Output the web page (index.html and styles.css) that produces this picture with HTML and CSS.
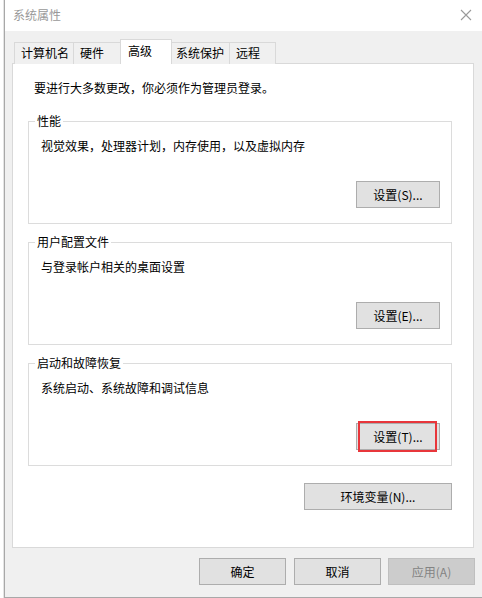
FILE: index.html
```html
<!DOCTYPE html>
<html lang="zh-CN">
<head>
<meta charset="utf-8">
<title>系统属性</title>
<link rel="stylesheet" href="styles.css">
</head>
<body>
<div class="window">
  <div class="titlebar">
    <span class="title">系统属性</span>
    <svg class="close" width="12" height="12" viewBox="0 0 12 12"><path d="M1 1 L11 11 M11 1 L1 11" stroke="#9a9a9a" stroke-width="1.1" fill="none"/></svg>
  </div>
  <div class="body">
    <div class="tabs">
      <div class="tab t1">计算机名</div>
      <div class="tab t2">硬件</div>
      <div class="tab t3 active">高级</div>
      <div class="tab t4">系统保护</div>
      <div class="tab t5">远程</div>
    </div>
    <div class="panel">
      <p class="intro">要进行大多数更改，你必须作为管理员登录。</p>
      <div class="group">
        <span class="legend">性能</span>
        <p class="desc">视觉效果，处理器计划，内存使用，以及虚拟内存</p>
        <div class="group-actions"><button class="btn btn-set">设置(S)...</button></div>
      </div>
      <div class="group">
        <span class="legend">用户配置文件</span>
        <p class="desc">与登录帐户相关的桌面设置</p>
        <div class="group-actions"><button class="btn btn-set">设置(E)...</button></div>
      </div>
      <div class="group">
        <span class="legend">启动和故障恢复</span>
        <p class="desc">系统启动、系统故障和调试信息</p>
        <div class="group-actions">
          <span class="hl-wrap"><button class="btn btn-set">设置(T)...</button><span class="highlight"></span></span>
        </div>
      </div>
      <div class="env-row"><button class="btn btn-env">环境变量(N)...</button></div>
    </div>
    <div class="footer">
      <button class="btn btn-foot ok">确定</button>
      <button class="btn btn-foot cancel">取消</button>
      <button class="btn btn-foot disabled">应用(A)</button>
    </div>
  </div>
</div>
</body>
</html>
```

FILE: styles.css
```css
* { box-sizing: border-box; }
html, body { margin: 0; padding: 0; background: #ffffff; }
body {
  font-family: "Noto Sans CJK SC", "Noto Sans", sans-serif;
  font-size: 12px;
  line-height: 16px;
  color: #000;
  overflow: hidden;
}
.window {
  margin-left: 4px;
  width: 478px;
  height: 598px;
  border-left: 1px solid #a8a8a8;
  border-bottom: 1px solid #a8a8a8;
  box-shadow: -1px 0 0 #e4e4e4;
  display: flex;
  flex-direction: column;
  background: #f0f0f0;
}
.titlebar {
  height: 31px;
  flex: none;
  background: #ffffff;
  display: flex;
  align-items: center;
  justify-content: space-between;
  padding: 0 10px 2px 8px;
}
.title { color: #999999; font-size: 12px; }
.close { display: block; margin-top: 1px; }
.body {
  flex: 1;
  display: flex;
  flex-direction: column;
  padding: 9px 0 0 7px;
}
.tabs {
  display: flex;
  align-items: flex-end;
  height: 24px;
  padding-left: 2px;
  position: relative;
  z-index: 1;
  margin-bottom: -1px;
}
.tab {
  height: 22px;
  border: 1px solid #d9d9d9;
  border-bottom: none;
  background: #f0f0f0;
  margin-right: -1px;
  padding-top: 2px;
  white-space: nowrap;
}
.tab.t1 { width: 60px; padding-left: 6px; }
.tab.t2 { width: 48px; padding-left: 6px; }
.tab.t3 { width: 52px; padding-left: 7px; }
.tab.t4 { width: 59px; padding-left: 4px; }
.tab.t5 { width: 47px; padding-left: 6px; }
.tab.active {
  height: 25px;
  background: #ffffff;
  border-color: #d9d9d9;
  padding-top: 3px;
  position: relative;
  z-index: 2;
}
.panel {
  width: 462px;
  height: 485px;
  background: #ffffff;
  border: 1px solid #d9d9d9;
  padding: 16px 21px 0 15px;
  display: flex;
  flex-direction: column;
}
.intro { margin: 0 0 25px 6px; }
.group {
  position: relative;
  border: 1px solid #dcdcdc;
  height: 103px;
  padding: 16px 11px 0 12px;
  margin-bottom: 18px;
}
.legend {
  position: absolute;
  left: 6px;
  top: -9px;
  padding: 0 2px;
  background: #ffffff;
}
.desc { margin: 0; }
.group-actions {
  display: flex;
  justify-content: flex-end;
  margin-top: 27px;
}
.btn {
  font-family: "Noto Sans CJK SC", "Noto Sans", sans-serif;
  font-size: 12px;
  color: #000;
  background: #e1e1e1;
  border: 1px solid #adadad;
  height: 27px;
  padding: 0;
  margin: 0;
  line-height: 16px;
}
.btn-set { width: 84px; display: block; }
.hl-wrap { position: relative; display: block; }
.highlight {
  position: absolute;
  left: 2px;
  top: -2px;
  width: 79px;
  height: 31px;
  border: 2px solid #e8363b;
  pointer-events: none;
}
.env-row {
  display: flex;
  justify-content: flex-end;
  margin-top: -1px;
}
.btn-env { width: 148px; }
.footer {
  display: flex;
  justify-content: flex-end;
  padding: 10px 7px 0 0;
}
.btn-foot { width: 87px; }
.btn-foot.cancel { margin-left: 8px; margin-right: 7px; }
.btn-foot.disabled {
  background: #cccccc;
  border-color: #bfbfbf;
  color: #838383;
}
```
